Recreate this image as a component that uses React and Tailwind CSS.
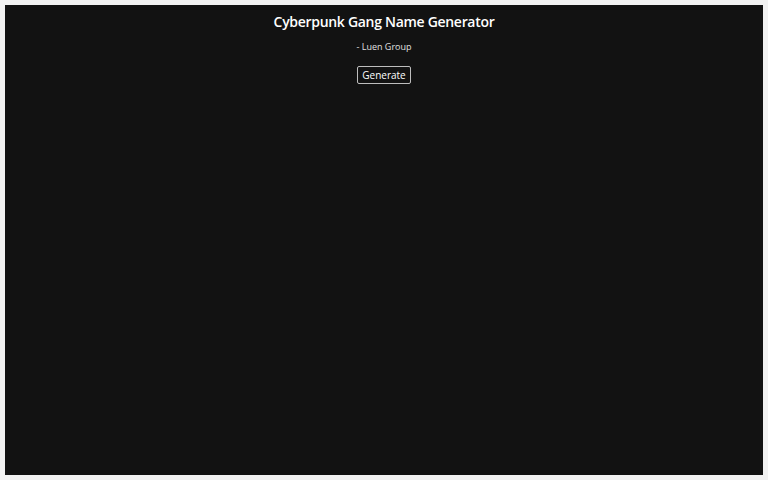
export default function App() {
  return (
    <div className="h-[480px] w-[768px] bg-[#f2f2f2] p-[5px] pb-[5px]" style={{ fontFamily: '"Open Sans", "Liberation Sans", sans-serif' }}>
      <div className="flex h-[470px] w-[758px] flex-col items-center bg-[#121212] pt-[7px] text-white">
        <h1 className="text-[14px] font-semibold leading-[20px] tracking-[-0.3px]">Cyberpunk Gang Name Generator</h1>
        <p className="mt-[9px] text-[9px] leading-[12px] text-[#e0e0e0]">- Luen Group</p>
        <button className="mt-[13px] box-border h-[18px] rounded-[2px] border border-[#bdbdbd] bg-[#121212] px-[4px] text-[10px] leading-[16px] text-white">
          Generate
        </button>
      </div>
    </div>
  )
}
